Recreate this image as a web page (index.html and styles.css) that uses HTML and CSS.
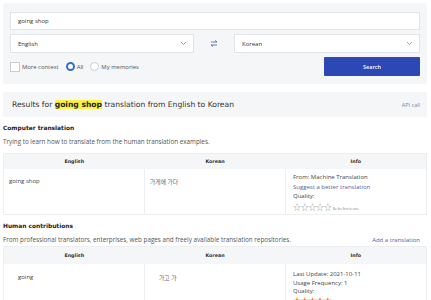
FILE: index.html
```html
<!DOCTYPE html>
<html lang="en">
  <head>
    <meta charset="UTF-8" />
    <meta name="viewport" content="width=device-width, initial-scale=1.0" />
    <title>going shop - English to Korean</title>
    <link rel="stylesheet" href="styles.css">
  </head>
  <body>
    <!-- Search panel -->
    <div class="search-panel">
      <div class="query-box">going shop</div>
      <div class="lang-row">
        <div class="lang-select lang-from">
          <span>English</span>
          <svg class="chevron" width="7" height="5" viewBox="0 0 7 5"><path d="M1 1l2.5 2.5L6 1" fill="none" stroke="#888" stroke-width="0.8"/></svg>
        </div>
        <div class="swap">
          <svg width="8" height="7" viewBox="0 0 8 7"><path d="M1 2h6M5 0.5L7 2M1 5h6M3 6.5L1 5" fill="none" stroke="#5a6fa8" stroke-width="0.9"/></svg>
        </div>
        <div class="lang-select lang-to">
          <span>Korean</span>
          <svg class="chevron" width="7" height="5" viewBox="0 0 7 5"><path d="M1 1l2.5 2.5L6 1" fill="none" stroke="#888" stroke-width="0.8"/></svg>
        </div>
      </div>
      <div class="options-row">
        <div class="options">
          <span class="checkbox"></span>
          <span class="opt-label">More context</span>
          <span class="radio radio-on"></span>
          <span class="opt-label">All</span>
          <span class="radio"></span>
          <span class="opt-label">My memories</span>
        </div>
        <button class="search-button">Search</button>
      </div>
    </div>

    <!-- Results header -->
    <div class="results-bar">
      <h1 class="results-title">Results for <mark>going shop</mark> translation from English to Korean</h1>
      <a class="link api-link">API call</a>
    </div>

    <!-- Computer translation -->
    <h2 class="section-title">Computer translation</h2>
    <div class="section-sub">
      <span>Trying to learn how to translate from the human translation examples.</span>
    </div>
    <table class="tr-table">
      <thead>
        <tr><th>English</th><th>Korean</th><th>Info</th></tr>
      </thead>
      <tbody>
        <tr class="row-machine">
          <td>going shop</td>
          <td class="ko">가게에 가다</td>
          <td class="info">
            From: Machine Translation<br />
            <a class="link">Suggest a better translation</a><br />
            Quality:<br />
            <span class="stars stars-empty">☆☆☆☆☆</span> <span class="vote">Be the first to vote</span>
          </td>
        </tr>
      </tbody>
    </table>

    <!-- Human contributions -->
    <h2 class="section-title section-two">Human contributions</h2>
    <div class="section-sub">
      <span>From professional translators, enterprises, web pages and freely available translation repositories.</span>
      <a class="link add-link">Add a translation</a>
    </div>
    <table class="tr-table human-table">
      <thead>
        <tr><th>English</th><th>Korean</th><th>Info</th></tr>
      </thead>
      <tbody>
        <tr class="row-human">
          <td class="indent">going</td>
          <td class="indent ko">가고 가</td>
          <td class="info">
            Last Update: 2021-10-11<br />
            Usage Frequency: 1<br />
            Quality:<br />
            <span class="stars stars-full">★★★★★</span> <span class="vote">Excellent</span>
          </td>
        </tr>
      </tbody>
    </table>
  </body>
</html>
```

FILE: styles.css
```css
/* page */
body {
  margin: 0;
  padding: 3px 4px 0 3px;
  background: #fff;
  color: #333;
  font-family: "Open Sans", "Noto Sans CJK KR", sans-serif;
  font-size: 6px;
}

/* search panel */
.search-panel {
  background: #f5f6f7;
  border-radius: 3px;
  padding: 9px 7px 8px 7px;
}
.query-box {
  height: 18px;
  box-sizing: border-box;
  background: #fff;
  border: 1px solid #e2e5e8;
  padding-left: 7px;
  display: flex;
  align-items: center;
  font-size: 6px;
  color: #333;
}
.lang-row {
  display: flex;
  margin-top: 4px;
}
.lang-select {
  height: 19px;
  box-sizing: border-box;
  background: #fff;
  border: 1px solid #e2e5e8;
  padding: 0 6px 0 7px;
  display: flex;
  align-items: center;
  justify-content: space-between;
  font-size: 6px;
}
.lang-from {
  width: 184px;
}
.lang-to {
  flex: 1;
}
.swap {
  width: 40px;
  display: flex;
  align-items: center;
  justify-content: center;
}
.options-row {
  display: flex;
  justify-content: space-between;
  align-items: center;
  margin-top: 4px;
}
.options {
  display: flex;
  align-items: center;
  font-size: 5.9px;
  color: #555;
}
.checkbox {
  width: 10px;
  height: 10px;
  box-sizing: border-box;
  border: 1px solid #c9ccd0;
  background: #fff;
  margin-right: 2px;
}
.radio {
  width: 9px;
  height: 9px;
  box-sizing: border-box;
  border-radius: 50%;
  border: 1px solid #c9ccd0;
  background: #fff;
  margin: 0 2px 0 7px;
}
.radio-on {
  border: 2.5px solid #2f6fd1;
}
.search-button {
  width: 96px;
  height: 19px;
  border: none;
  border-radius: 1px;
  background: #2c48b5;
  color: #fff;
  font-family: inherit;
  font-size: 5.5px;
  font-weight: 600;
}

/* results bar */
.results-bar {
  margin-top: 8px;
  height: 25px;
  background: #f5f6f7;
  border-radius: 2px;
  padding: 0 7px 0 9px;
  display: flex;
  align-items: center;
  justify-content: space-between;
}
.results-title {
  margin: 0;
  font-family: "DejaVu Sans", sans-serif;
  font-size: 7.6px;
  font-weight: normal;
  color: #333;
}
.results-title mark {
  background: #fff23e;
  font-weight: bold;
  color: #222;
}
.link {
  color: #4d63a8;
}
.api-link {
  font-size: 5.5px;
  color: #7a86a8;
}

/* sections */
.section-title {
  margin: 7px 0 0 0;
  font-family: "DejaVu Sans", sans-serif;
  font-size: 5.9px;
  font-weight: bold;
  line-height: 8px;
  color: #222;
}
.section-two {
  margin-top: 7px;
}
.section-sub {
  margin-top: 6px;
  line-height: 8px;
  font-size: 6.3px;
  color: #555;
  display: flex;
  justify-content: space-between;
  padding-right: 7px;
}
.add-link {
  font-size: 6px;
}

/* tables */
.tr-table {
  width: 100%;
  margin-top: 7px;
  border-collapse: collapse;
  table-layout: fixed;
  border: 1px solid #eceef0;
}
.tr-table th {
  height: 15px;
  padding: 0;
  background: #f5f6f7;
  font-family: "DejaVu Sans", sans-serif;
  font-size: 4.8px;
  font-weight: bold;
  color: #333;
}
.tr-table td {
  vertical-align: top;
  border-left: 1px solid #eceef0;
  font-size: 6px;
  color: #444;
  padding: 8px 7px 0 5px;
  height: 33px;
}
.tr-table td.ko {
  color: #666;
  font-size: 5.8px;
}
.tr-table td.info {
  padding: 4px 6px 0 7px;
  line-height: 9.5px;
}
.human-table {
  margin-top: 2px;
}
.human-table th {
  height: 17px;
}
.human-table td {
  padding-top: 9px;
}
.human-table td.indent {
  padding-left: 14px;
}
.human-table td.info {
  padding-top: 6px;
  line-height: 8.7px;
}
.stars {
  font-size: 8px;
  letter-spacing: -0.3px;
}
.stars-empty {
  color: #999;
}
.stars-full {
  color: #e88a1a;
}
.vote {
  font-size: 3px;
  color: #777;
}
```
